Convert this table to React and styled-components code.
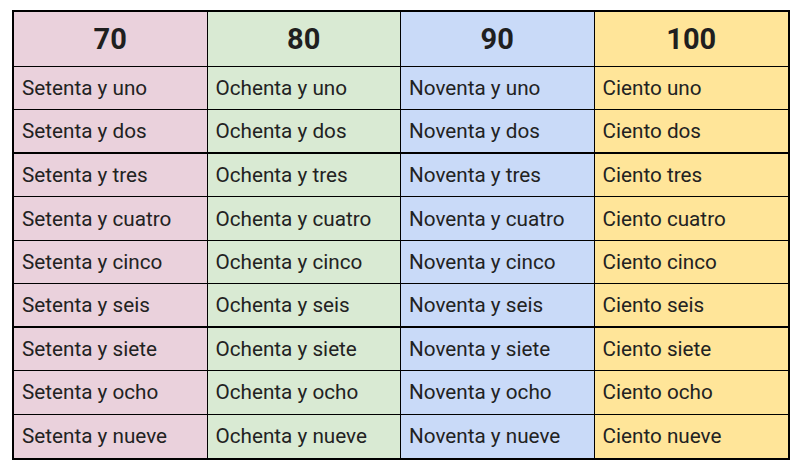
import styled, { createGlobalStyle } from 'styled-components';

const GlobalStyle = createGlobalStyle`
    * {
        box-sizing: border-box;
    }

    body {
        margin: 0;
        background: #ffffff;
        font-family: Roboto, 'Liberation Sans', sans-serif;
    }
`;

const columns = [
    { title: '70', color: '#ead1dc', prefix: 'Setenta y ' },
    { title: '80', color: '#d9ead3', prefix: 'Ochenta y ' },
    { title: '90', color: '#c9daf8', prefix: 'Noventa y ' },
    { title: '100', color: '#ffe599', prefix: 'Ciento ' },
];

const units = ['uno', 'dos', 'tres', 'cuatro', 'cinco', 'seis', 'siete', 'ocho', 'nueve'];

// rows after which the sheet has a thicker line
const thickAfter = [1, 5];

const App = () => {
    return (
        <Page>
            <GlobalStyle />
            <Sheet>
                {columns.map((col) => (
                    <HeaderCell key={col.title} bg={col.color}>
                        {col.title}
                    </HeaderCell>
                ))}
                {units.map((unit, i) =>
                    columns.map((col) => (
                        <Cell
                            key={col.title + unit}
                            bg={col.color}
                            thick={thickAfter.includes(i)}
                            last={i === units.length - 1}
                        >
                            {col.prefix + unit}
                        </Cell>
                    ))
                )}
            </Sheet>
        </Page>
    );
};

export default App;

const Page = styled.div`
    padding: 10px 0 0 12px;
`;

const Sheet = styled.div`
    display: grid;
    grid-template-columns: repeat(4, 1fr);
    grid-template-rows: 55px repeat(9, 1fr);
    width: 778px;
    height: 450px;
    border: 2px solid #000000;
`;

const HeaderCell = styled.div`
    display: flex;
    align-items: center;
    justify-content: center;
    background: ${(props) => props.bg};
    border-right: 1px solid #000000;
    border-bottom: 1px solid #000000;
    font-size: 29px;
    font-weight: 700;
    color: #1f1f1f;

    &:nth-child(4) {
        border-right: none;
    }
`;

const Cell = styled.div`
    display: flex;
    align-items: center;
    padding: 0 8px;
    background: ${(props) => props.bg};
    border-right: 1px solid #000000;
    border-bottom: ${(props) =>
        props.last ? 'none' : props.thick ? '2px solid #000000' : '1px solid #000000'};
    font-size: 20.7px;
    color: #222222;
    white-space: nowrap;

    &:nth-child(4n) {
        border-right: none;
    }
`;
